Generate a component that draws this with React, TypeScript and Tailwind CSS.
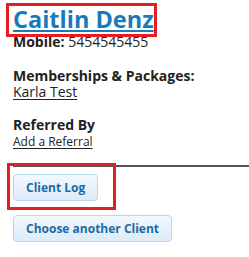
export default function App() {
  const font = { fontFamily: '"Open Sans", "Noto Sans", sans-serif' };
  return (
    <div className="relative w-[249px] h-[257px] bg-white overflow-hidden text-[#222]" style={font}>
      <div className="pl-[13px] pt-[6px]">
        <a href="#" className="block text-[23.5px] leading-[27px] font-bold text-[#1a7ab9] underline decoration-2 underline-offset-[2px]">
          Caitlin Denz
        </a>
        <div className="text-[14px] leading-[18px]">
          <span className="font-bold">Mobile:</span> 5454545455
        </div>

        <div className="mt-[17px] text-[14px] leading-[16px] font-bold">Memberships &amp; Packages:</div>
        <a href="#" className="block text-[14px] leading-[16px] text-[#222] underline underline-offset-2">
          Karla Test
        </a>

        <div className="mt-[17px] text-[14px] leading-[16px] font-bold">Referred By</div>
        <a href="#" className="block mt-[1px] text-[12px] leading-[16px] text-[#222] underline underline-offset-2">
          Add a Referral
        </a>

        <div className="mt-[15px] h-[2px] bg-[#555]" />

        <div className="flex flex-col items-start gap-[14px] pt-[7px]">
          <button className="h-[27px] px-[12px] rounded-[4px] border border-[#bcd5ee] bg-gradient-to-b from-[#f2f8fe] to-[#dcebf9] text-[12px] font-bold text-[#1d6aa5]">
            Client Log
          </button>
          <button className="h-[27px] px-[12px] rounded-[4px] border border-[#bcd5ee] bg-gradient-to-b from-[#f2f8fe] to-[#dcebf9] text-[12px] font-bold text-[#1d6aa5]">
            Choose another Client
          </button>
        </div>
      </div>

      <div className="absolute left-[6px] top-[3px] w-[151px] h-[34px] border-[3px] border-[#e31e24]" />
      <div className="absolute left-[7px] top-[163px] w-[109px] h-[47px] border-[3px] border-[#e31e24]" />
    </div>
  );
}
